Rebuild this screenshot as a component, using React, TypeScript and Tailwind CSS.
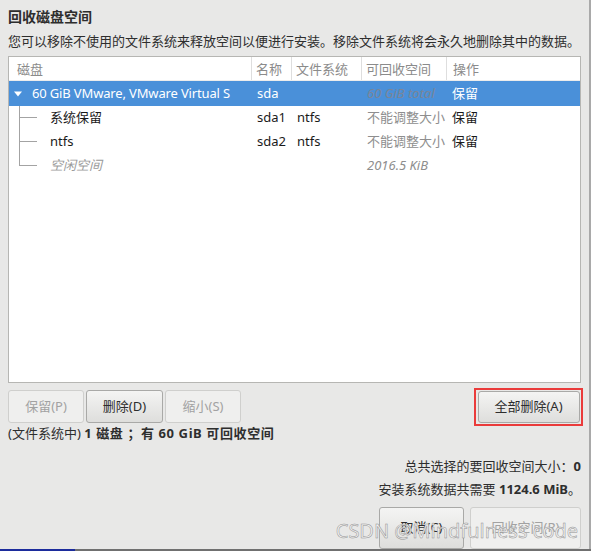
const font = { fontFamily: '"Noto Sans", "Noto Sans CJK SC", sans-serif' };

type Row = {
  name: string;
  dev: string;
  fs: string;
  space: string;
  action: string;
  kind: "disk" | "part" | "free";
  last?: boolean;
};

const rows: Row[] = [
  { name: "60 GiB VMware, VMware Virtual S", dev: "sda", fs: "", space: "60 GiB total", action: "保留", kind: "disk" },
  { name: "系统保留", dev: "sda1", fs: "ntfs", space: "不能调整大小", action: "保留", kind: "part" },
  { name: "ntfs", dev: "sda2", fs: "ntfs", space: "不能调整大小", action: "保留", kind: "part" },
  { name: "空闲空间", dev: "", fs: "", space: "2016.5 KiB", action: "", kind: "free", last: true },
];

function TreeLine({ last }: { last?: boolean }) {
  return (
    <div className="ml-[10px] flex h-full w-[18px] shrink-0 flex-col">
      <div className="h-1/2 border-b border-l border-[#a3a3a3]" />
      <div className={"h-1/2 " + (last ? "" : "border-l border-[#a3a3a3]")} />
    </div>
  );
}

function TableRow({ row }: { row: Row }) {
  const selected = row.kind === "disk";
  return (
    <div
      className={
        "flex items-center text-[13px] " +
        (selected ? "h-[25px] bg-[#4a90d9] text-white" : "h-[24px] text-[#1a1a1a]")
      }
    >
      <div className="flex h-full w-[243px] items-center">
        {selected ? (
          <>
            <svg className="ml-[4px] mr-[9px]" width="10" height="8" viewBox="0 0 10 8">
              <path d="M1 1.5h8L5 6.5z" fill="#ffffff" />
            </svg>
            <span className="tracking-[-0.15px]">{row.name}</span>
          </>
        ) : (
          <>
            <TreeLine last={row.last} />
            <span className={"ml-[13px] " + (row.kind === "free" ? "italic text-[#9a9a9a]" : "")}>
              {row.name}
            </span>
          </>
        )}
      </div>
      <div className="w-[40px] pl-[5px]">{row.dev}</div>
      <div className="w-[70px] pl-[5px]">{row.fs}</div>
      <div
        className={
          "w-[85px] pl-[5px] " +
          (selected ? "italic text-[#7a8597]" : row.kind === "free" ? "italic text-[#8e8e8e]" : "text-[#8e8e8e]")
        }
      >
        {row.space}
      </div>
      <div className="pl-[5px]">{row.action}</div>
    </div>
  );
}

function Btn({ label, disabled, className = "" }: { label: string; disabled?: boolean; className?: string }) {
  return (
    <div
      className={
        "flex items-center justify-center rounded-[3px] border text-[13px] " +
        (disabled
          ? "border-[#cfcfcd] bg-[#efefee] text-[#a2a2a2]"
          : "border-[#a9a9a7] bg-gradient-to-b from-[#f4f4f3] to-[#dededc] text-[#2e2e2e]") +
        " " +
        className
      }
    >
      {label}
    </div>
  );
}

export default function App() {
  return (
    <div className="relative h-[551px] w-[591px] overflow-hidden bg-[#e8e8e7]" style={font}>
      <div className="flex h-[549px] w-[589px] flex-col px-[8px]">
        <div className="mt-[8px] h-[18px] text-[14px] font-bold leading-[18px] text-[#2e2e2e]">回收磁盘空间</div>
        <div className="mt-[6px] h-[18px] whitespace-nowrap text-[13px] leading-[18px] text-[#2e2e2e]">
          您可以移除不使用的文件系统来释放空间以便进行安装。移除文件系统将会永久地删除其中的数据。
        </div>

        <div className="mt-[6px] h-[337px] w-[573px] border border-[#b6b6b3] bg-white">
          <div className="flex h-[24px] items-center border-b border-[#ececec] text-[13px] text-[#8b8b8b]">
            <div className="h-full w-[243px] border-r border-[#dedede] pl-[8px] leading-[24px]">磁盘</div>
            <div className="h-full w-[40px] border-r border-[#dedede] pl-[4px] leading-[24px]">名称</div>
            <div className="h-full w-[70px] border-r border-[#dedede] pl-[4px] leading-[24px]">文件系统</div>
            <div className="h-full w-[85px] border-r border-[#dedede] pl-[4px] leading-[24px]">可回收空间</div>
            <div className="h-full pl-[6px] leading-[24px]">操作</div>
          </div>
          {rows.map((r) => (
            <TableRow key={r.name} row={r} />
          ))}
        </div>

        <div className="mt-[7px] flex h-[33px] items-center">
          <Btn label="保留(P)" disabled className="h-[33px] w-[76px]" />
          <Btn label="删除(D)" className="ml-[2px] h-[33px] w-[77px]" />
          <Btn label="缩小(S)" disabled className="ml-[2px] h-[33px] w-[76px]" />
          <div className="ml-auto mr-[-2px] flex h-[38px] w-[109px] items-center justify-center border-2 border-[#ea3b3b]">
            <Btn label="全部删除(A)" className="h-[32px] w-[102px]" />
          </div>
        </div>

        <div className="mt-[2px] h-[16px] whitespace-nowrap text-[13px] leading-[16px] text-[#2e2e2e]">
          (文件系统中) <span className="font-bold tracking-[0.6px]">1 磁盘 ；有 60 GiB 可回收空间</span>
        </div>

        <div className="mt-[17px] h-[16px] text-right text-[13px] leading-[16px] text-[#2e2e2e]">
          总共选择的要回收空间大小：<span className="font-bold">0</span>
        </div>
        <div className="mt-[7px] h-[16px] text-right text-[13px] leading-[16px] text-[#2e2e2e]">
          安装系统数据共需要 <span className="font-bold">1124.6 MiB</span>。
        </div>

        <div className="mt-[10px] flex justify-end gap-[6px]">
          <Btn label="取消(C)" className="h-[42px] w-[85px]" />
          <Btn label="回收空间(R)" disabled className="h-[42px] w-[111px]" />
        </div>
      </div>

      <div className="absolute right-0 top-0 h-full w-[2px] bg-[#a9a9a9]" />
      <div className="absolute bottom-0 left-0 h-[2px] w-full bg-[#707070]" />
      <div className="absolute bottom-0 left-0 h-[2px] w-[75px] bg-[#1c2c9c]" />

      <div
        className="pointer-events-none absolute bottom-[5px] right-[13px] whitespace-nowrap text-[20px] text-[#f2f2f2]"
        style={{ fontFamily: '"Noto Sans", sans-serif', WebkitTextStroke: "0.5px #909090" }}
      >
        CSDN @Mindfulness code
      </div>
    </div>
  );
}
